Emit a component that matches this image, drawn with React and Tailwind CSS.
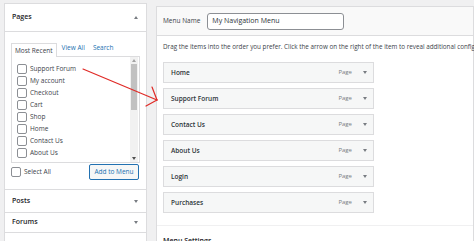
import React from 'react';

const pages = ['Support Forum', 'My account', 'Checkout', 'Cart', 'Shop', 'Home', 'Contact Us', 'About Us'];
const menuItems = ['Home', 'Support Forum', 'Contact Us', 'About Us', 'Login', 'Purchases'];

function Box({ className = '' }) {
  return <span className={`block w-[10px] h-[10px] shrink-0 rounded-[2px] border border-[#8c8f94] bg-white ${className}`} />;
}

function Caret({ up = false }) {
  return (
    <svg width="4" height="3" viewBox="0 0 4 3" className="shrink-0">
      {up ? <path d="M0 3 L2 0 L4 3 Z" fill="#787c82" /> : <path d="M0 0 L4 0 L2 3 Z" fill="#787c82" />}
    </svg>
  );
}

export default function App() {
  return (
    <div
      className="relative w-[474px] h-[241px] overflow-hidden bg-[#f0f0f1] flex items-start pt-[3px] pl-[4px] text-[#3c434a] text-[6.5px]"
      style={{ fontFamily: '"Open Sans", "Noto Sans", sans-serif' }}
    >
      {/* Left column */}
      <div className="w-[143px] shrink-0 bg-white border border-[#dcdcde] flex flex-col">
        <div className="h-[28px] border-b border-[#dcdcde] flex items-center justify-between pl-[7px] pr-[8px]">
          <span className="text-[7px] font-semibold text-[#1d2327]">Pages</span>
          <Caret up />
        </div>
        <div className="px-[6px] pt-[11px] pb-[9px] border-b border-[#dcdcde]">
          <div className="flex items-end h-[13px]">
            <div className="h-[14px] px-[3px] border border-b-0 border-[#dcdcde] bg-white flex items-center relative top-[1px]">Most Recent</div>
            <span className="ml-[5px] mb-[3px] text-[#2271b1]">View All</span>
            <span className="ml-[8px] mb-[3px] text-[#2271b1]">Search</span>
          </div>
          <div className="h-[107px] border border-[#dcdcde] flex">
            <div className="flex-1 pl-[5px] pt-[6px]">
              {pages.map((p) => (
                <div key={p} className="h-[12px] flex items-center gap-[3px]">
                  <Box />
                  <span>{p}</span>
                </div>
              ))}
            </div>
            <div className="w-[8px] mr-[1px] bg-[#f1f1f1] flex flex-col items-center pt-[2px] pb-[2px]">
              <svg width="4" height="3" viewBox="0 0 4 3"><path d="M0 3 L2 0 L4 3 Z" fill="#a3a3a3" /></svg>
              <div className="w-[6px] h-[46px] mt-[2px] bg-[#c1c1c1]" />
              <div className="flex-1" />
              <svg width="4" height="3" viewBox="0 0 4 3"><path d="M0 0 L4 0 L2 3 Z" fill="#505050" /></svg>
            </div>
          </div>
          <div className="flex items-center justify-between mt-[1px] h-[16px]">
            <div className="flex items-center gap-[3px]">
              <Box />
              <span>Select All</span>
            </div>
            <div className="w-[50px] h-[16px] mr-[1px] rounded-[2px] border border-[#2271b1] bg-[#f6f7f7] text-[#2271b1] flex items-center justify-center">
              Add to Menu
            </div>
          </div>
        </div>
        {['Posts', 'Forums', 'Custom Links'].map((s, i) => (
          <div key={s} className={`${i === 0 ? 'h-[23px]' : 'h-[20px]'} border-b border-[#dcdcde] flex items-center justify-between pl-[7px] pr-[8px]`}>
            <span className="text-[7px] font-semibold text-[#1d2327]">{i < 2 ? s : ''}</span>
            {i < 2 && <Caret />}
          </div>
        ))}
      </div>

      {/* Right column */}
      <div className="ml-[9px] mt-[3px] w-[318px] shrink-0 h-[260px] bg-white border border-[#dcdcde] flex flex-col">
        <div className="h-[29px] bg-[#f9f9f9] border-b border-[#dcdcde] flex items-center pl-[6px]">
          <span>Menu Name</span>
          <div className="ml-[7px] w-[137px] h-[17px] rounded-[3px] border border-[#8c8f94] bg-white flex items-center pl-[4px] text-[7px] text-[#2c3338]">
            My Navigation Menu
          </div>
        </div>
        <div className="pl-[6px] pt-[6px] flex-1">
          <p className="whitespace-nowrap text-[6.3px]">Drag the items into the order you prefer. Click the arrow on the right of the item to reveal additional configuration options.</p>
          <div className="mt-[11px] w-[211px] flex flex-col gap-[5px]">
            {menuItems.map((m) => (
              <div key={m} className="h-[21px] border border-[#dcdcde] bg-[#f6f7f7] flex items-center pl-[7px] pr-[6px]">
                <span className="flex-1 font-semibold text-[#2c3338]">{m}</span>
                <span className="text-[6px] text-[#787c82]">Page</span>
                <span className="ml-[11px]"><Caret /></span>
              </div>
            ))}
          </div>
          <div className="mt-[12px] -ml-[6px] border-t border-[#f0f0f1] pt-[10px] pl-[6px] text-[7px] font-semibold text-[#1d2327]">
            Menu Settings
          </div>
        </div>
      </div>

      {/* Red annotation arrow */}
      <svg className="absolute left-0 top-0 pointer-events-none" width="474" height="241" viewBox="0 0 474 241">
        <g stroke="#e02a26" strokeWidth="1.2" fill="none" strokeLinecap="round">
          <line x1="83" y1="69" x2="157" y2="100" />
          <line x1="152" y1="87" x2="157" y2="100" />
          <line x1="146" y1="106" x2="157" y2="100" />
        </g>
      </svg>
    </div>
  );
}
